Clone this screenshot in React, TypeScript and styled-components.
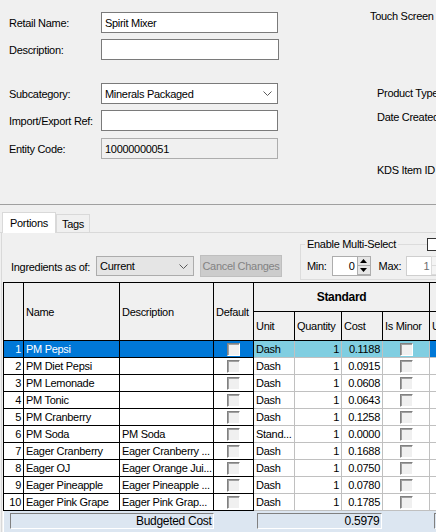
import styled, { createGlobalStyle } from 'styled-components';

const GlobalStyle = createGlobalStyle`
  html, body {
    margin: 0;
    padding: 0;
    background: #f0f0f0;
  }
  body {
    font-family: "Liberation Sans", Arial, sans-serif;
    font-size: 11px;
    letter-spacing: -0.3px;
    color: #000;
  }
`;

const rows = [
	{ n: 1, name: 'PM Pepsi', desc: '', unit: 'Dash', qty: 1, cost: '0.1188' },
	{ n: 2, name: 'PM Diet Pepsi', desc: '', unit: 'Dash', qty: 1, cost: '0.0915' },
	{ n: 3, name: 'PM Lemonade', desc: '', unit: 'Dash', qty: 1, cost: '0.0608' },
	{ n: 4, name: 'PM Tonic', desc: '', unit: 'Dash', qty: 1, cost: '0.0643' },
	{ n: 5, name: 'PM Cranberry', desc: '', unit: 'Dash', qty: 1, cost: '0.1258' },
	{ n: 6, name: 'PM Soda', desc: 'PM Soda', unit: 'Stand...', qty: 1, cost: '0.0000' },
	{ n: 7, name: 'Eager Cranberry', desc: 'Eager Cranberry ...', unit: 'Dash', qty: 1, cost: '0.1688' },
	{ n: 8, name: 'Eager OJ', desc: 'Eager Orange Jui...', unit: 'Dash', qty: 1, cost: '0.0750' },
	{ n: 9, name: 'Eager Pineapple', desc: 'Eager Pineapple ...', unit: 'Dash', qty: 1, cost: '0.0780' },
	{ n: 10, name: 'Eager Pink Grape', desc: 'Eager Pink Grap...', unit: 'Dash', qty: 1, cost: '0.1785' },
];

const Chevron = () => (
	<svg width="9" height="5" viewBox="0 0 9 5">
		<path d="M0.5 0.5 L4.5 4.5 L8.5 0.5" fill="none" stroke="#5a5a5a" strokeWidth="1" />
	</svg>
);

export default function App() {
	return (
		<>
			<GlobalStyle />
			<Page>
				<TopPanel>
					<Form>
						<Field $top={12}>
							<Label>Retail Name:</Label>
							<TextBox>Spirit Mixer</TextBox>
						</Field>
						<Field $top={6}>
							<Label>Description:</Label>
							<TextBox $wide />
						</Field>
						<Field $top={23}>
							<Label>Subcategory:</Label>
							<ComboBox>
								<span>Minerals Packaged</span>
								<Chevron />
							</ComboBox>
						</Field>
						<Field $top={6}>
							<Label>Import/Export Ref:</Label>
							<TextBox />
						</Field>
						<Field $top={7}>
							<Label>Entity Code:</Label>
							<TextBox $readOnly>10000000051</TextBox>
						</Field>
					</Form>
					<SideLabels>
						<SideLabel $top={10} $indent={0}>Touch Screen</SideLabel>
						<SideLabel $top={64} $indent={7}>Product Type</SideLabel>
						<SideLabel $top={11} $indent={7}>Date Created</SideLabel>
						<SideLabel $top={40} $indent={7}>KDS Item ID</SideLabel>
					</SideLabels>
				</TopPanel>

				<TabStrip>
					<Tab $active>Portions</Tab>
					<Tab>Tags</Tab>
				</TabStrip>

				<TabPanel>
					<Toolbar>
						<ToolLabel>Ingredients as of:</ToolLabel>
						<DateCombo>
							<span>Current</span>
							<Chevron />
						</DateCombo>
						<DisabledButton>Cancel Changes</DisabledButton>
						<GroupBox>
							<GroupTitle>Enable Multi-Select</GroupTitle>
							<GroupCheck />
							<GroupRow>
								<span>Min:</span>
								<Spin>
									<SpinValue>0</SpinValue>
									<SpinButtons>
										<SpinBtn>
											<svg width="7" height="4" viewBox="0 0 7 4"><path d="M3.5 0 L7 4 L0 4 Z" fill="#000" /></svg>
										</SpinBtn>
										<SpinBtn>
											<svg width="7" height="4" viewBox="0 0 7 4"><path d="M0 0 L7 0 L3.5 4 Z" fill="#000" /></svg>
										</SpinBtn>
									</SpinButtons>
								</Spin>
								<span>Max:</span>
								<Spin $disabled>
									<SpinValue $disabled>1</SpinValue>
									<SpinButtons>
										<SpinBtn $disabled />
										<SpinBtn $disabled />
									</SpinButtons>
								</Spin>
							</GroupRow>
						</GroupBox>
					</Toolbar>

					<GridWrap>
						<Grid>
							<colgroup>
								<col style={{ width: 20 }} />
								<col style={{ width: 96 }} />
								<col style={{ width: 94 }} />
								<col style={{ width: 40 }} />
								<col style={{ width: 41 }} />
								<col style={{ width: 47 }} />
								<col style={{ width: 41 }} />
								<col style={{ width: 47 }} />
								<col style={{ width: 40 }} />
							</colgroup>
							<thead>
								<tr>
									<HeadCell rowSpan={2} />
									<HeadCell rowSpan={2}>Name</HeadCell>
									<HeadCell rowSpan={2}>Description</HeadCell>
									<HeadCell rowSpan={2}>Default</HeadCell>
									<GroupHead colSpan={4}>Standard</GroupHead>
									<GroupHead />
								</tr>
								<tr>
									<HeadCell>Unit</HeadCell>
									<HeadCell>Quantity</HeadCell>
									<HeadCell>Cost</HeadCell>
									<HeadCell>Is Minor</HeadCell>
									<HeadCell>U</HeadCell>
								</tr>
							</thead>
							<tbody>
								{rows.map((r) => {
									const sel = r.n === 1;
									return (
										<tr key={r.n}>
											<Cell $sel={sel} $align="right">{r.n}</Cell>
											<Cell $sel={sel}>{r.name}</Cell>
											<Cell $sel={sel}>{r.desc}</Cell>
											<Cell $sel={sel} $align="center">
												<Check />
											</Cell>
											<SubCell $sel={sel}>{r.unit}</SubCell>
											<SubCell $sel={sel} $align="right">{r.qty}</SubCell>
											<SubCell $sel={sel} $align="right">{r.cost}</SubCell>
											<SubCell $sel={sel} $align="center">
												<Check />
											</SubCell>
											<SubCell $sel={sel} $dark={sel} />
										</tr>
									);
								})}
							</tbody>
							<tfoot>
								<tr>
									<FootCell colSpan={3}>
										<Sunken $align="right" $left={6}>Budgeted Cost</Sunken>
									</FootCell>
									<FootCell />
									<FootCell colSpan={4}>
										<Sunken $align="right" $left={3} $width={125}>0.5979</Sunken>
									</FootCell>
									<FootCell>
										<Sunken $left={4} />
									</FootCell>
								</tr>
							</tfoot>
						</Grid>
					</GridWrap>
				</TabPanel>
			</Page>
		</>
	);
}

const Page = styled.div`
	width: 436px;
	height: 532px;
	overflow: hidden;
	background: #f0f0f0;
	display: flex;
	flex-direction: column;
`;

const TopPanel = styled.div`
	height: 205px;
	flex: none;
	display: flex;
	border-bottom: 1px solid #a0a0a0;
	box-sizing: border-box;
`;

const Form = styled.div`
	width: 300px;
	flex: none;
	padding-left: 9px;
	box-sizing: border-box;
	display: flex;
	flex-direction: column;
`;

const Field = styled.div<{ $top: number }>`
	display: flex;
	align-items: center;
	height: 21px;
	margin-top: ${(p) => p.$top}px;
`;

const Label = styled.div`
	width: 92px;
	flex: none;
`;

const TextBox = styled.div<{ $readOnly?: boolean; $wide?: boolean }>`
	width: ${(p) => (p.$wide ? 178 : 177)}px;
	height: 21px;
	box-sizing: border-box;
	border: 1px solid ${(p) => (p.$readOnly ? '#adadad' : '#7a7a7a')};
	background: ${(p) => (p.$readOnly ? '#f0f0f0' : '#fff')};
	padding: 0 3px;
	display: flex;
	align-items: center;
	font-size: 11px;
`;

const ComboBox = styled(TextBox)`
	justify-content: space-between;
	padding-right: 5px;
`;

const SideLabels = styled.div`
	display: flex;
	flex-direction: column;
	padding-left: 70px;
`;

const SideLabel = styled.div<{ $top: number; $indent: number }>`
	margin-top: ${(p) => p.$top}px;
	margin-left: ${(p) => p.$indent}px;
	white-space: nowrap;
	line-height: 13px;
`;

const TabStrip = styled.div`
	height: 28px;
	flex: none;
	display: flex;
	align-items: flex-end;
	padding-left: 2px;
	box-sizing: border-box;
	border-bottom: 1px solid #d9d9d9;
`;

const Tab = styled.div<{ $active?: boolean }>`
	height: ${(p) => (p.$active ? 21 : 18)}px;
	padding: 0 ${(p) => (p.$active ? 7 : 5)}px;
	display: flex;
	align-items: center;
	border: 1px solid #d9d9d9;
	border-bottom: none;
	background: ${(p) => (p.$active ? '#fff' : '#f0f0f0')};
	margin-bottom: ${(p) => (p.$active ? -1 : 0)}px;
	box-sizing: border-box;
	position: relative;
`;

const TabPanel = styled.div`
	flex: 1;
	margin-left: 1px;
	border-left: 1px solid #d9d9d9;
	background: #f0f0f0;
	display: flex;
	flex-direction: column;
	min-height: 0;
`;

const Toolbar = styled.div`
	height: 49px;
	flex: none;
	display: flex;
	align-items: flex-end;
	padding: 0 0 5px 9px;
	box-sizing: border-box;
	white-space: nowrap;
`;

const ToolLabel = styled.div`
	flex: none;
	width: 85px;
	margin-bottom: 4px;
`;

const DateCombo = styled.div`
	flex: none;
	width: 98px;
	height: 20px;
	box-sizing: border-box;
	border: 1px solid #acacac;
	background: #e5e5e5;
	display: flex;
	align-items: center;
	justify-content: space-between;
	padding: 0 5px 0 3px;
	margin-bottom: 1px;
`;

const DisabledButton = styled.div`
	flex: none;
	width: 82px;
	height: 22px;
	margin-left: 6px;
	box-sizing: border-box;
	border: 1px solid #bfbfbf;
	background: #cccccc;
	color: #838383;
	display: flex;
	align-items: center;
	justify-content: center;
`;

const GroupBox = styled.div`
	flex: none;
	margin-left: 18px;
	width: 150px;
	height: 36px;
	box-sizing: border-box;
	border: 1px solid #dcdcdc;
	border-right: none;
	position: relative;
	display: flex;
	align-items: flex-end;
	padding: 0 0 3px 6px;
	margin-bottom: -3px;
`;

const GroupTitle = styled.div`
	position: absolute;
	left: 4px;
	top: -8px;
	padding: 0 2px;
	background: #f0f0f0;
	line-height: 14px;
`;

const GroupCheck = styled.div`
	position: absolute;
	left: 126px;
	top: -7px;
	width: 13px;
	height: 13px;
	box-sizing: border-box;
	border: 1px solid #333;
	background: #fff;
`;

const GroupRow = styled.div`
	display: flex;
	align-items: center;
	gap: 5px;
`;

const Spin = styled.div<{ $disabled?: boolean }>`
	width: 39px;
	height: 20px;
	box-sizing: border-box;
	border: 1px solid ${(p) => (p.$disabled ? '#cfcfcf' : '#adadad')};
	background: #fff;
	display: flex;
	margin-right: 3px;
`;

const SpinValue = styled.div<{ $disabled?: boolean }>`
	flex: 1;
	text-align: right;
	padding-right: 2px;
	line-height: 18px;
	color: ${(p) => (p.$disabled ? '#6d6d6d' : '#000')};
`;

const SpinButtons = styled.div`
	width: 13px;
	display: flex;
	flex-direction: column;
`;

const SpinBtn = styled.div<{ $disabled?: boolean }>`
	flex: 1;
	display: flex;
	align-items: center;
	justify-content: center;
	background: ${(p) => (p.$disabled ? '#f4f4f4' : '#e6e6e6')};
	border: 1px solid ${(p) => (p.$disabled ? '#dcdcdc' : '#adadad')};
	margin: -1px -1px 0 0;
`;

const GridWrap = styled.div`
	flex: 1;
	overflow: hidden;
	padding-left: 1px;
`;

const Grid = styled.table`
	border-collapse: collapse;
	table-layout: fixed;
	width: 466px;
	background: #fff;
	border-top: 1px solid #000;
`;

const HeadCell = styled.th`
	background: #f0f0f0;
	border: 1px solid #000;
	font-weight: normal;
	text-align: left;
	padding: 0 2px;
	height: 28px;
	white-space: nowrap;
	overflow: hidden;
`;

const GroupHead = styled(HeadCell)`
	font-weight: bold;
	text-align: center;
	font-size: 12px;
`;

const Cell = styled.td<{ $sel?: boolean; $align?: string }>`
	height: 16px;
	padding: 0 2px;
	border: 1px solid #000;
	background: ${(p) => (p.$sel ? '#0078d7' : '#fff')};
	color: ${(p) => (p.$sel ? '#fff' : '#000')};
	text-align: ${(p) => p.$align || 'left'};
	white-space: nowrap;
	overflow: hidden;
	line-height: 14px;
`;

const SubCell = styled(Cell)<{ $dark?: boolean }>`
	border-color: #c0c0c0;
	background: ${(p) => (p.$dark ? '#0078d7' : p.$sel ? '#80cee1' : '#fff')};
	color: #000;
	&:nth-child(5) {
		border-left-color: #000;
	}
`;

const Check = styled.div`
	display: inline-block;
	vertical-align: middle;
	width: 13px;
	height: 13px;
	box-sizing: border-box;
	border-style: solid;
	border-width: 1px;
	border-color: #808080 #fff #fff #808080;
	box-shadow: inset 1px 1px 0 #a0a0a0;
	background: #f0f0f0;
`;

const FootCell = styled.td`
	background: #dce6f1;
	border-top: 1px solid #000;
	height: 20px;
	padding: 2px 0 0 0;
	vertical-align: top;
`;

const Sunken = styled.div<{ $align?: string; $left: number; $width?: number }>`
	height: 16px;
	box-sizing: border-box;
	border-style: solid;
	border-width: 1px;
	border-color: #808080 #fff #fff #808080;
	text-align: ${(p) => p.$align || 'left'};
	padding-right: 1px;
	line-height: 14px;
	font-size: 12px;
	margin-left: ${(p) => p.$left}px;
	width: ${(p) => (p.$width ? `${p.$width}px` : 'auto')};
`;
